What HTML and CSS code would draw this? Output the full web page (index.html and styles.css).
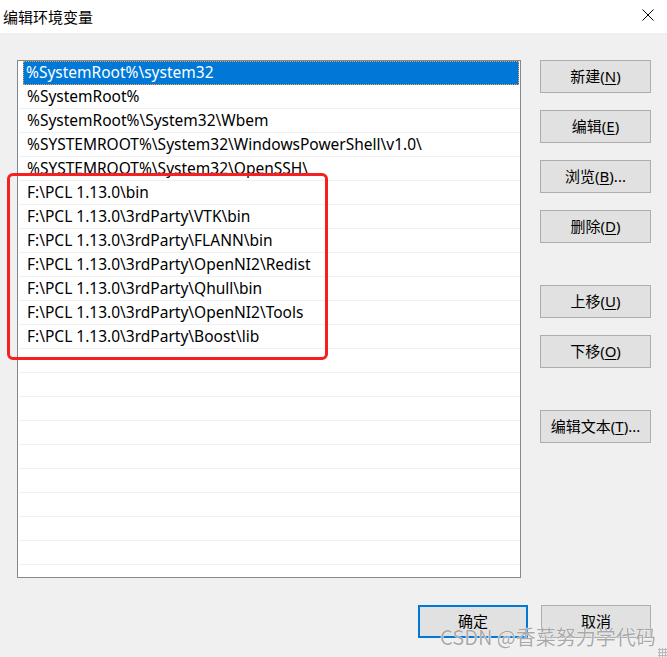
FILE: index.html
```html
<!DOCTYPE html>
<html lang="zh-CN">
	<head>
		<meta charset="UTF-8" />
		<meta name="viewport" content="width=device-width, initial-scale=1.0" />
		<title>编辑环境变量</title>
		<link rel="stylesheet" href="styles.css">
	</head>
	<body>
		<div class="dialog">
			<div class="titlebar">
				<span class="title">编辑环境变量</span>
				<svg class="close" viewBox="0 0 12 12" width="12" height="12">
					<path d="M0.5 0.5 L11.5 11.5 M11.5 0.5 L0.5 11.5" stroke="#000" stroke-width="1" fill="none" />
				</svg>
			</div>
			<div class="content">
				<div class="main">
					<div class="list">
						<div class="row selected">%SystemRoot%\system32</div>
						<div class="row">%SystemRoot%</div>
						<div class="row">%SystemRoot%\System32\Wbem</div>
						<div class="row">%SYSTEMROOT%\System32\WindowsPowerShell\v1.0\</div>
						<div class="row">%SYSTEMROOT%\System32\OpenSSH\</div>
						<div class="row">F:\PCL 1.13.0\bin</div>
						<div class="row">F:\PCL 1.13.0\3rdParty\VTK\bin</div>
						<div class="row">F:\PCL 1.13.0\3rdParty\FLANN\bin</div>
						<div class="row">F:\PCL 1.13.0\3rdParty\OpenNI2\Redist</div>
						<div class="row">F:\PCL 1.13.0\3rdParty\Qhull\bin</div>
						<div class="row">F:\PCL 1.13.0\3rdParty\OpenNI2\Tools</div>
						<div class="row">F:\PCL 1.13.0\3rdParty\Boost\lib</div>
						<div class="row"></div>
						<div class="row"></div>
						<div class="row"></div>
						<div class="row"></div>
						<div class="row"></div>
						<div class="row"></div>
						<div class="row"></div>
						<div class="row"></div>
						<div class="row"></div>
						<div class="row"></div>
					</div>
					<div class="side">
						<button class="btn">新建(<u>N</u>)</button>
						<button class="btn">编辑(<u>E</u>)</button>
						<button class="btn">浏览(<u>B</u>)...</button>
						<button class="btn">删除(<u>D</u>)</button>
						<button class="btn group">上移(<u>U</u>)</button>
						<button class="btn">下移(<u>O</u>)</button>
						<button class="btn group">编辑文本(<u>T</u>)...</button>
					</div>
				</div>
				<div class="footer">
					<button class="btn primary">确定</button>
					<button class="btn">取消</button>
				</div>
			</div>
			<!-- 截图上的红色标注框 -->
			<div class="mark"></div>
			<div class="watermark">CSDN @香菜努力学代码</div>
			<div class="grip"></div>
		</div>
	</body>
</html>
```

FILE: styles.css
```css
html,
body {
	margin: 0;
	padding: 0;
}
body {
	width: 667px;
	height: 657px;
	overflow: hidden;
	background: #f0f0f0;
	font-family: "Noto Sans", "Noto Sans CJK SC", sans-serif;
	font-size: 15px;
	color: #000;
}
.dialog {
	position: relative;
	width: 667px;
	height: 657px;
}
.titlebar {
	height: 33px;
	background: #fff;
	display: flex;
	align-items: center;
	justify-content: space-between;
	padding: 0 13px 0 3px;
}
.title {
	font-family: "Noto Sans CJK SC", sans-serif;
	font-size: 15px;
	line-height: 1;
	margin-top: -1px;
}
.close {
	display: block;
	margin-top: -4px;
}
.content {
	padding: 27px 16px 0 17px;
}
.main {
	display: flex;
	align-items: flex-start;
}
.list {
	width: 502px;
	height: 516px;
	border: 1px solid #828790;
	background: #fff;
	overflow: hidden;
	flex-shrink: 0;
	font-size: 15.5px;
}
.row {
	height: 23px;
	line-height: 23px;
	border-bottom: 1px solid #f0f0f0;
	margin-left: 1px;
	padding-left: 8px;
	white-space: nowrap;
	overflow: hidden;
}
.row.selected {
	margin-left: 5px;
	margin-right: 1px;
	padding-left: 3px;
	background: #0078d7;
	color: #fff;
	outline: 1px dotted #f7a23d;
	outline-offset: -1px;
	border-bottom-color: #0078d7;
}
.side {
	display: flex;
	flex-direction: column;
	gap: 17px;
	margin-left: 19px;
}
.btn {
	width: 111px;
	height: 33px;
	padding: 0;
	background: #e1e1e1;
	border: 1px solid #adadad;
	font-family: "Noto Sans", "Noto Sans CJK SC", sans-serif;
	font-size: 15px;
	color: #000;
	line-height: 1;
}
.btn u {
	text-underline-offset: 2px;
}
.btn.group {
	margin-top: 25px;
}
.footer {
	display: flex;
	justify-content: flex-end;
	gap: 13px;
	margin-top: 27px;
}
.footer .btn {
	width: 110px;
}
.btn.primary {
	border: 2px solid #0078d7;
}
.mark {
	position: absolute;
	left: 7px;
	top: 173px;
	width: 315px;
	height: 181px;
	border: 3px solid #f5201f;
	border-radius: 6px;
}
.watermark {
	position: absolute;
	left: 440px;
	top: 622px;
	font-family: "Noto Sans CJK SC", sans-serif;
	font-size: 20px;
	color: rgba(140, 140, 140, 0.75);
	text-shadow: 0 0 1px #fff, 0 0 1px #fff;
	white-space: nowrap;
}
.grip {
	position: absolute;
	right: 0;
	bottom: 0;
	width: 9px;
	height: 9px;
	background-image: radial-gradient(circle, #b8b8b8 1px, transparent 1.2px);
	background-size: 3px 3px;
}
```
